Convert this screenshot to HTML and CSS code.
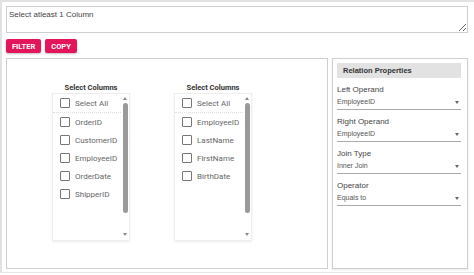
FILE: index.html
```html
<!DOCTYPE html>
<html lang="en">
<head>
  <meta charset="UTF-8">
  <title>Query Builder</title>
  <link rel="stylesheet" href="styles.css">
</head>
<body>
  <div class="frame">
    <textarea class="query-text">Select atleast 1 Column</textarea>
    <div class="actions">
      <button type="button" class="btn">FILTER</button>
      <button type="button" class="btn">COPY</button>
    </div>
    <div class="workspace">
      <div class="canvas">
        <div class="table-box">
          <div class="table-title">Select Columns</div>
          <div class="list">
            <div class="items">
              <div class="item head"><span class="check"></span>Select All</div>
              <div class="item"><span class="check"></span>OrderID</div>
              <div class="item"><span class="check"></span>CustomerID</div>
              <div class="item"><span class="check"></span>EmployeeID</div>
              <div class="item"><span class="check"></span>OrderDate</div>
              <div class="item"><span class="check"></span>ShipperID</div>
            </div>
            <div class="scroll"><span class="arrow up"></span><span class="thumb"></span><span class="arrow down"></span></div>
          </div>
        </div>
        <div class="table-box">
          <div class="table-title">Select Columns</div>
          <div class="list">
            <div class="items">
              <div class="item head"><span class="check"></span>Select All</div>
              <div class="item"><span class="check"></span>EmployeeID</div>
              <div class="item"><span class="check"></span>LastName</div>
              <div class="item"><span class="check"></span>FirstName</div>
              <div class="item"><span class="check"></span>BirthDate</div>
            </div>
            <div class="scroll"><span class="arrow up"></span><span class="thumb"></span><span class="arrow down"></span></div>
          </div>
        </div>
      </div>
      <div class="props">
        <div class="props-title">Relation Properties</div>
        <div class="field">
          <div class="field-label">Left Operand</div>
          <div class="select">EmployeeID<span class="caret"></span></div>
        </div>
        <div class="field">
          <div class="field-label">Right Operand</div>
          <div class="select">EmployeeID<span class="caret"></span></div>
        </div>
        <div class="field">
          <div class="field-label">Join Type</div>
          <div class="select">Inner Join<span class="caret"></span></div>
        </div>
        <div class="field">
          <div class="field-label">Operator</div>
          <div class="select">Equals to<span class="caret"></span></div>
        </div>
      </div>
    </div>
  </div>
</body>
</html>
```

FILE: styles.css
```css
body {
  margin: 0;
  background: #fff;
  font-family: "Liberation Sans", Arial, sans-serif;
}
.frame {
  width: 464px;
  height: 266px;
  border-top: 2px solid #e2e2e2;
  border-left: 2px solid #e2e2e2;
  border-bottom: 1px solid #e8e8e8;
  padding: 4px 4px 0 4px;
}
.query-text {
  display: block;
  box-sizing: border-box;
  width: 462px;
  height: 27px;
  margin: 0;
  padding: 3px 2px;
  border: 1px solid #cfcfcf;
  font-family: "Liberation Sans", Arial, sans-serif;
  font-size: 8px;
  color: #444;
  resize: vertical;
}
.actions {
  display: flex;
  gap: 4px;
  margin-top: 6px;
}
.btn {
  background-color: #e3165b;
  color: #fff;
  border: none;
  border-radius: 2px;
  height: 14px;
  padding: 0 6px;
  font-family: Roboto, sans-serif;
  font-weight: bold;
  font-size: 7.5px;
  box-shadow: 0 1px 2px rgba(0, 0, 0, 0.25);
}
.workspace {
  display: flex;
  gap: 4px;
  margin-top: 5px;
}
.canvas {
  box-sizing: border-box;
  width: 322px;
  height: 211px;
  border: 1px solid #cfcfcf;
  display: flex;
  gap: 44px;
  padding: 24px 0 0 45px;
}
.table-box {
  width: 78px;
}
.table-title {
  text-align: center;
  font-family: Roboto, sans-serif;
  font-size: 7.5px;
  font-weight: bold;
  color: #333;
  height: 9px;
  line-height: 9px;
}
.list {
  box-sizing: border-box;
  height: 148px;
  margin-top: 1px;
  border: 1px solid #eee;
  box-shadow: 0 1px 2px rgba(0, 0, 0, 0.08);
  display: flex;
}
.items {
  flex: 1;
}
.item {
  height: 18px;
  display: flex;
  align-items: center;
  font-family: Roboto, sans-serif;
  font-size: 8px;
  color: #666;
  padding-left: 7px;
}
.item.head {
  border-bottom: 1px dotted #ddd;
}
.check {
  box-sizing: border-box;
  width: 10px;
  height: 10px;
  border: 1px solid #777;
  border-radius: 1px;
  margin-right: 5px;
}
.scroll {
  width: 8px;
  display: flex;
  flex-direction: column;
  align-items: center;
}
.thumb {
  width: 5px;
  height: 110px;
  background: #9a9a9a;
  border-radius: 3px;
}
.arrow {
  width: 0;
  height: 0;
  border-left: 2px solid transparent;
  border-right: 2px solid transparent;
  margin: 3px 0;
}
.arrow.up {
  border-bottom: 3px solid #888;
}
.arrow.down {
  border-top: 3px solid #888;
  margin-top: auto;
  margin-bottom: 4px;
}
.props {
  box-sizing: border-box;
  width: 136px;
  height: 211px;
  border: 1px solid #cfcfcf;
  box-shadow: 0 1px 2px rgba(0, 0, 0, 0.1);
  padding: 4px 6px 0 4px;
}
.props-title {
  background: #e2e2e2;
  height: 15px;
  line-height: 15px;
  padding-left: 6px;
  font-size: 7.5px;
  font-weight: bold;
  color: #333;
}
.field {
  margin-top: 6px;
}
.field:first-of-type {
  margin-top: 4px;
}
.field-label {
  font-size: 8px;
  color: #444;
  height: 11px;
  line-height: 11px;
}
.select {
  position: relative;
  height: 14px;
  line-height: 14px;
  font-size: 7px;
  color: #555;
  border-bottom: 1px solid #aaa;
}
.caret {
  position: absolute;
  right: 2px;
  top: 6px;
  width: 0;
  height: 0;
  border-left: 2.5px solid transparent;
  border-right: 2.5px solid transparent;
  border-top: 3px solid #666;
}
```
